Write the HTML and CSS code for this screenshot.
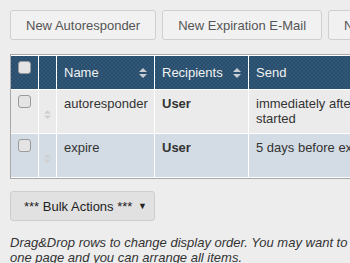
FILE: index.html
```html
<!DOCTYPE html>
<html lang="en">
<head>
    <meta charset="UTF-8">
    <title>Autoresponders</title>
    <link rel="stylesheet" href="styles.css">
</head>
<body>
    <div class="page">
        <div class="toolbar">
            <button class="btn">New Autoresponder</button>
            <button class="btn">New Expiration E-Mail</button>
            <button class="btn">New Broadcast</button>
        </div>

        <table class="grid">
            <thead>
                <tr>
                    <th class="col-check"><input type="checkbox" class="cb"></th>
                    <th class="col-drag"></th>
                    <th class="col-name">Name <svg class="sort" width="8" height="10" viewBox="0 0 8 10"><path d="M4 0L8 4H0z M4 10L0 6H8z"/></svg></th>
                    <th class="col-rcpt">Recipients <svg class="sort" width="8" height="10" viewBox="0 0 8 10"><path d="M4 0L8 4H0z M4 10L0 6H8z"/></svg></th>
                    <th class="col-send">Send</th>
                </tr>
            </thead>
            <tbody>
                <tr class="odd">
                    <td class="col-check"><input type="checkbox" class="cb"></td>
                    <td class="col-drag"><svg class="drag" width="7" height="9" viewBox="0 0 8 10"><path d="M4 0L8 4H0z M4 10L0 6H8z"/></svg></td>
                    <td>autoresponder</td>
                    <td><b>User</b></td>
                    <td>immediately after membership<br>started</td>
                </tr>
                <tr class="even">
                    <td class="col-check"><input type="checkbox" class="cb"></td>
                    <td class="col-drag"><svg class="drag" width="7" height="9" viewBox="0 0 8 10"><path d="M4 0L8 4H0z M4 10L0 6H8z"/></svg></td>
                    <td>expire</td>
                    <td><b>User</b></td>
                    <td>5 days before expiration<br>&nbsp;</td>
                </tr>
            </tbody>
        </table>

        <div class="bulk">
            <span>*** Bulk Actions ***</span>
            <span class="arrow">&#9660;</span>
        </div>

        <p class="hint">Drag&amp;Drop rows to change display order. You may want to display all records on<br>one page and you can arrange all items.</p>
    </div>
</body>
</html>
```

FILE: styles.css
```css
html, body {
    margin: 0;
    padding: 0;
    overflow: hidden;
}
body {
    font-family: 'Liberation Sans', Arial, sans-serif;
    font-size: 13px;
    background-color: #ededed;
    color: #333;
}
.page {
    width: 760px;
    padding: 10px;
}
.toolbar {
    display: flex;
    gap: 6px;
    margin-bottom: 14px;
}
.btn {
    font-family: inherit;
    font-size: 13px;
    height: 30px;
    padding: 0 15px;
    background: #f1f1f1;
    color: #555;
    border: 1px solid #cfcfcf;
    border-radius: 3px;
    white-space: nowrap;
}
.grid {
    border: 1px solid #a8a8a8;
    border-spacing: 0;
    width: 600px;
    table-layout: fixed;
}
.grid th, .grid td {
    border-right: 1px solid #fff;
    border-bottom: 1px solid #fff;
    text-align: left;
    vertical-align: top;
    line-height: 15px;
}
.grid th {
    height: 28px;
    padding: 0 7px;
    vertical-align: middle;
    font-weight: normal;
    color: #f2f2f2;
    border-top: 1px solid #fff;
    background-color: #2f5879;
    background-image:
        linear-gradient(45deg, rgba(0,0,0,.12) 25%, transparent 25%, transparent 75%, rgba(0,0,0,.12) 75%),
        linear-gradient(45deg, rgba(0,0,0,.12) 25%, transparent 25%, transparent 75%, rgba(0,0,0,.12) 75%);
    background-size: 4px 4px;
    background-position: 0 0, 2px 2px;
}
.grid td {
    padding: 6px 7px 7px;
}
.grid tr.odd td {
    background: #ebebeb;
}
.grid tr.even td {
    background: #d3dce4;
}
.grid .col-check {
    width: 13px;
    padding: 0 7px;
    text-align: center;
}
.grid th.col-check {
    vertical-align: top;
    padding-top: 5px;
}
.grid td.col-check {
    padding-top: 5px;
}
.grid .col-drag {
    width: 17px;
    padding: 0;
    text-align: center;
    vertical-align: middle;
}
.grid .col-name {
    width: 83px;
}
.grid .col-rcpt {
    width: 79px;
}
.sort {
    float: right;
    margin-top: 3px;
    fill: #c9ced4;
}
.drag {
    display: block;
    margin: 6px auto 0;
    fill: #cfcfcf;
}
.cb {
    appearance: none;
    -webkit-appearance: none;
    display: block;
    width: 13px;
    height: 13px;
    margin: 0;
    border: 1px solid #9a9a9a;
    border-radius: 3px;
    background: #e4e4e4;
    box-sizing: border-box;
}
.bulk {
    display: flex;
    justify-content: space-between;
    align-items: center;
    width: 145px;
    height: 30px;
    margin-top: 12px;
    padding: 0 7px 0 13px;
    box-sizing: border-box;
    background: #e1e1e1;
    border: 1px solid #cdcdcd;
    border-radius: 3px;
    color: #222;
}
.bulk .arrow {
    font-size: 9px;
}
.hint {
    margin: 14px 0 0;
    font-style: italic;
    font-size: 13px;
    line-height: 15px;
    color: #333;
}
```
